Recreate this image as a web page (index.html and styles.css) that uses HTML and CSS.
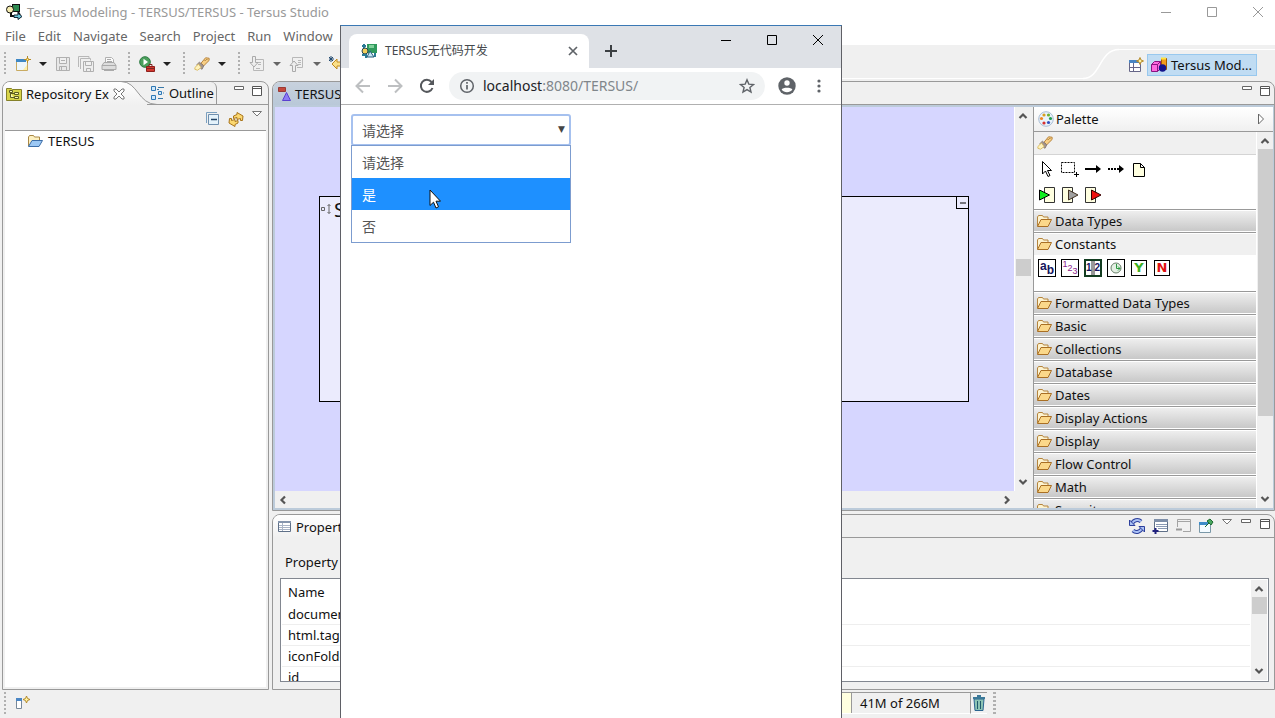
FILE: index.html
```html
<!DOCTYPE html>
<html lang="zh-CN">
<head>
	<meta charset="UTF-8">
	<title>Tersus Modeling - TERSUS/TERSUS - Tersus Studio</title>
	<link rel="stylesheet" href="styles.css">
</head>
<body>
	<svg class="defs" aria-hidden="true">
		<symbol id="folder" viewBox="0 0 16 16">
			<path d="M1.500 13V4l1-1.500h4l1 1.500h4.500v2.500" fill="#fdf3d0" stroke="#b5843c"/>
			<path d="M1.500 13.500L5 6.500h10.500L12 13.500z" fill="#fbd88a" stroke="#a96f24"/>
		</symbol>
		<symbol id="torch" viewBox="0 0 18 16">
			<path d="M8 7l5-6 4 .5V4l-6 6z" fill="#f8cf85" stroke="#b07a30"/>
			<path d="M12 4h1M14 3h1" stroke="#7a4a10"/>
			<path d="M6 6l5 4-2 4-6-5z" fill="#a3958e" stroke="#857870"/>
			<path d="M5 8l3 4-4 3-3-1V12z" fill="#fff3bd" stroke="#d7b85c"/>
		</symbol>
		<symbol id="down" viewBox="0 0 10 6"><path d="M1 1h8L5 5z" fill="currentColor"/></symbol>
		<symbol id="chev" viewBox="0 0 10 8"><path d="M1.500 6L5 2.500 8.500 6" fill="none" stroke="#555" stroke-width="2.200"/></symbol>
		<symbol id="min" viewBox="0 0 12 12"><path d="M1.500 1.500h9v3h-9z" fill="#fff" stroke="#666"/></symbol>
		<symbol id="max" viewBox="0 0 12 12"><path d="M1.500 1.500h9v9h-9zM1.500 3.500h9" fill="#fff" stroke="#555"/></symbol>
		<symbol id="tri" viewBox="0 0 12 12"><path d="M1.500 1.500h9L6 6z" fill="#fff" stroke="#777"/></symbol>
		<symbol id="wmin" viewBox="0 0 12 12"><path d="M1 6.500h10" stroke="currentColor"/></symbol>
		<symbol id="wmax" viewBox="0 0 12 12"><path d="M1.500 1.500h9v9h-9z" fill="none" stroke="currentColor"/></symbol>
		<symbol id="wclose" viewBox="0 0 12 12"><path d="M1 1l10 10M11 1L1 11" stroke="currentColor"/></symbol>
	</svg>

	<header class="titlebar">
		<svg class="i18" viewBox="0 0 18 18">
			<rect x="7.500" y="1.500" width="7" height="7" fill="#2e8a50" stroke="#111"/>
			<circle cx="5" cy="6.500" r="3.500" fill="#f6edb0" stroke="#111"/>
			<path d="M6 10v3h4M13 9l2 3" fill="none" stroke="#111" stroke-width="2"/>
			<path d="M9 12h4v-2l4 3.500-4 3v-2H9z" fill="#6cc6d8" stroke="#123"/>
		</svg>
		<span class="app-title">Tersus Modeling - TERSUS/TERSUS - Tersus Studio</span>
		<div class="win-buttons">
			<button aria-label="Minimize"><svg class="i12"><use href="#wmin"/></svg></button>
			<button aria-label="Maximize"><svg class="i12"><use href="#wmax"/></svg></button>
			<button aria-label="Close"><svg class="i12"><use href="#wclose"/></svg></button>
		</div>
	</header>

	<nav class="menubar">
		<button>File</button>
		<button>Edit</button>
		<button>Navigate</button>
		<button>Search</button>
		<button>Project</button>
		<button>Run</button>
		<button>Window</button>
	</nav>

	<div class="toolbar">
		<div class="group">
			<button aria-label="New"><svg class="i16" viewBox="0 0 16 16">
				<path d="M1.500 3.500h11v11h-11z" fill="#eef7fb" stroke="#c9ab62"/><path d="M1 3h10v3H1z" fill="#3f88c5"/>
				<path d="M8 14l4-5v5z" fill="#fff0a8"/><path d="M12.500 0v7M9 3.500h7" stroke="#b58a2a"/><path d="M11.500 2.500h2v2h-2z" fill="#fff3a0" stroke="#c9a030"/>
			</svg></button>
			<button aria-label="New menu"><svg class="drop"><use href="#down"/></svg></button>
			<button aria-label="Save"><svg class="i16" viewBox="0 0 16 16"><path d="M1.500 1.500h13v13h-13zM4.500 1.500v6h7v-6M4.500 14.500v-4h7v4M6.500 11v3M6 4.500h4" fill="#e8e8e8" stroke="#b0b0b0"/></svg></button>
			<button aria-label="Save all"><svg class="i16" viewBox="0 0 16 16"><path d="M.5 11V.5H11V3M2.500 13V2.500h10v2" fill="none" stroke="#b8b8b8"/><path d="M5.500 5.500h10v10h-10zM7.500 5.500v4h6v-4M8.500 15.500v-3h4v3" fill="#eee" stroke="#b0b0b0"/></svg></button>
			<button aria-label="Print"><svg class="i16" viewBox="0 0 16 16"><path d="M4.500 7V1.500h6l2 2V7" fill="#fafafa" stroke="#b0b0b0"/><path d="M3 6.500h10l2 3v4H1v-4zM1 9.500h14M3 14.500h10M6 3.500h4M6 5.500h5" fill="#ddd" stroke="#aaa"/></svg></button>
		</div>
		<div class="group">
			<button aria-label="Run external tool"><svg class="i16" viewBox="0 0 16 16">
				<circle cx="6" cy="6" r="5.300" fill="#4ba05c" stroke="#2b7a40"/><path d="M4.500 2.800L9 6 4.500 9.200z" fill="#fff"/>
				<path d="M7.500 10.500h8v5h-8z" fill="#d2362e" stroke="#8e201c"/><path d="M10 10V8.500h3V10M8 12.500h7" fill="none" stroke="#7c2722"/>
			</svg></button>
			<button aria-label="Run menu"><svg class="drop"><use href="#down"/></svg></button>
		</div>
		<div class="group">
			<button aria-label="Search"><svg class="i16"><use href="#torch"/></svg></button>
			<button aria-label="Search menu"><svg class="drop"><use href="#down"/></svg></button>
		</div>
		<div class="group dim">
			<button aria-label="Next annotation"><svg class="i16" viewBox="0 0 16 16"><path d="M6 3.500h8.500v11h-10V11M9 6.500h3M9 8.500h3M7 12.500h4" fill="none" stroke="#b8b8b8"/><path d="M3.500.5h3v6H9L5 11 1 6.500h2.500z" fill="#eee" stroke="#aaa"/></svg></button>
			<button aria-label="Next menu"><svg class="drop"><use href="#down"/></svg></button>
			<button aria-label="Previous annotation"><svg class="i16" viewBox="0 0 16 16"><path d="M3.500 6V1.500h10v10H8M9 4.500h3M9 6.500h3M9 8.500h3" fill="none" stroke="#b8b8b8"/><path d="M3.500 15.500h3v-6H9L5 5 1 9.500h2.500z" fill="#eee" stroke="#aaa"/></svg></button>
			<button aria-label="Previous menu"><svg class="drop"><use href="#down"/></svg></button>
			<button aria-label="Last edit"><svg class="i16" viewBox="0 0 16 16"><path d="M3 8l5-5v3h8v4H8v3z" fill="#fbe08a" stroke="#c08a20"/><path d="M2 0v6M-1 3h6M0 1l4 4M4 1L0 5" stroke="#234a70"/></svg></button>
		</div>
		<div class="persp-line"></div>
		<svg class="persp-curve" viewBox="0 0 36 36"><path d="M0 33.500C18 33.500 16 4.500 36 4.500" fill="none" stroke="#fff" stroke-width="1.500"/></svg>
		<div class="persp">
			<button aria-label="Open perspective"><svg class="i16" viewBox="0 0 16 16"><path d="M1.500 3.500h11v11h-11zM5.500 6v8M2 10.500h10" fill="#fff" stroke="#668"/><path d="M1 3h10v3H1z" fill="#4a86c4"/><path d="M12 .5L13 3l2.500 1L13 5l-1 2.500L11 5 8.500 4 11 3z" fill="#fff3a0" stroke="#b58a2a"/></svg></button>
			<button class="persp-active"><svg class="i16" viewBox="0 0 16 16">
				<path d="M10.500 1.500h5v11h-5z" fill="#f29a1c" stroke="#a35a00"/><path d="M10 .5h5v2h-5z" fill="#ffe23c"/>
				<path d="M.5 7.500l3-3h6v7l-3 3h-6z" fill="#ff6adf" stroke="#8a1580"/><path d="M.5 7.500h6v7M6.500 7.500l3-3" fill="none" stroke="#8a1580"/>
				<circle cx="11.500" cy="11" r="3.700" fill="#14148c"/>
			</svg>Tersus Mod...</button>
		</div>
	</div>

	<main class="workbench">
		<section class="view explorer">
			<div class="tabs">
				<button class="tab active"><svg class="i16" viewBox="0 0 16 16"><path d="M.5 2.500h5l1 1h9v11H.5z" fill="#d8d44a" stroke="#85812a"/><path d="M3.500 4.500h3v2h-3zM8.500 6.500h4v2h-4zM8.500 10.500h4v2h-4zM4.500 7v4.500H8M5 7.500h3" fill="#fbf9b0" stroke="#5d5b22"/></svg>Repository Ex</button>
				<button class="tab-x" aria-label="Close Repository Explorer"><svg class="i12" viewBox="0 0 12 12"><path d="M1 1h2l3 3 3-3h2v2L8 6l3 3v2H9L6 8l-3 3H1V9l3-3-3-3z" fill="#fff" stroke="#777"/></svg></button>
				<svg class="tab-curve" viewBox="0 0 36 24"><path d="M0 .5C17 .5 17 23.500 36 23.500V24H0z" fill="url(#tabfade)"/><path d="M0 .5C17 .5 17 23.500 36 23.500" fill="none" stroke="#999"/>
					<defs><linearGradient id="tabfade" x1="0" y1="0" x2="0" y2="1"><stop offset="0" stop-color="#fff"/><stop offset="1" stop-color="#f0f0f0"/></linearGradient></defs></svg>
				<button class="tab outline"><svg class="i16" viewBox="0 0 16 16"><path d="M1.500 1.500h4v4h-4zM1.500 10.500h4v4h-4z" fill="#cfe8fb" stroke="#2f78b4"/><path d="M8.500 6.500h3v3h-3z" fill="#cfe8fb" stroke="#2f78b4"/><path d="M8 2.500h6M8 13.500h5M7 4.500h2M13 8h1" stroke="#3878a8"/></svg>Outline</button>
				<div class="tab-fill">
					<button aria-label="Minimize"><svg class="i12"><use href="#min"/></svg></button>
					<button aria-label="Maximize"><svg class="i12"><use href="#max"/></svg></button>
				</div>
			</div>
			<div class="view-tools">
				<button aria-label="Collapse all"><svg class="i16" viewBox="0 0 16 16"><path d="M1.500 12V1.500H12" fill="none" stroke="#7aa0c0"/><path d="M3.500 3.500h10v10h-10z" fill="#e4f2fb" stroke="#6f8fae"/><path d="M6 8.500h6" stroke="#246" stroke-width="1.500"/></svg></button>
				<button aria-label="Link with editor"><svg class="i16" viewBox="0 0 16 16"><path d="M5.500 7.500V5L9 3.500V1.500L15 5l-.5 4.500h-2V7.500L9 8.500V6.500z" fill="#fbd870" stroke="#a8741c"/><path d="M10 9.500V12l-3 1.500v2L1 12l.5-4.500h2v2L7 8.500v2z" fill="#fbd870" stroke="#a8741c"/></svg></button>
				<button class="up" aria-label="View menu"><svg class="i12"><use href="#tri"/></svg></button>
			</div>
			<ul class="tree">
				<li><svg class="i16" viewBox="0 0 16 16"><path d="M1.500 13V4l1-1.500h4l1 1.500h5v3" fill="#fdf0c0" stroke="#a98744"/><path d="M1.500 13.500L5 7.500h10.500L12 13.500z" fill="#9cc8f4" stroke="#3c6ea8"/></svg>TERSUS</li>
			</ul>
		</section>

		<div class="column">
			<section class="view editor">
				<div class="tabs">
					<button class="tab editor-tab"><svg class="i16" viewBox="0 0 16 16"><path d="M2.500 1.500h7v4h-7z" fill="#c4483c" stroke="#9b3a34"/><path d="M10.500 6.500l4 8h-8z" fill="#8c7cf4" stroke="#5a40d0"/></svg>TERSUS</button>
					<div class="tab-fill">
						<button aria-label="Minimize"><svg class="i12"><use href="#min"/></svg></button>
						<button aria-label="Maximize"><svg class="i12"><use href="#max"/></svg></button>
					</div>
				</div>
				<div class="editor-body">
					<div class="diagram">
						<div class="canvas">
							<div class="node">
								<svg class="node-mark" viewBox="0 0 12 12"><path d="M1.500 4.500h3v3h-3zM9 1.500v9M7.500 3L9 1.500 10.500 3M7.500 9L9 10.500 10.500 9" fill="none" stroke="#666"/></svg>
								<span class="node-name">S</span>
								<button class="node-fold" aria-label="Collapse"><svg class="fold-bar" viewBox="0 0 8 2"><path d="M1 1h6" stroke="#000"/></svg></button>
							</div>
						</div>
						<div class="scroll-v">
							<svg class="chev"><use href="#chev"/></svg>
							<i class="thumb canvas-thumb"></i>
							<svg class="chev down"><use href="#chev"/></svg>
						</div>
						<div class="scroll-h">
							<svg class="chev left"><use href="#chev"/></svg>
							<svg class="chev right"><use href="#chev"/></svg>
						</div>
					</div>
					<aside class="palette">
						<div class="palette-head">
							<svg class="i16" viewBox="0 0 16 16"><circle cx="8" cy="8" r="7.300" fill="#eaf2fa" stroke="#a8bcd4"/><circle cx="6" cy="4" r="1.600" fill="#d8a020"/><circle cx="10.500" cy="4" r="1.600" fill="#70b030"/><circle cx="3.500" cy="7.500" r="1.600" fill="#f08820"/><circle cx="12.500" cy="7.500" r="1.600" fill="#209a50"/><circle cx="6" cy="12" r="1.600" fill="#d83030"/><circle cx="10.500" cy="11.500" r="1.600" fill="#3050c0"/></svg>
							<span>Palette</span>
							<button aria-label="Hide palette"><svg class="i12" viewBox="0 0 12 12"><path d="M3.500 1L8.500 6l-5 5z" fill="#fff" stroke="#666"/></svg></button>
						</div>
						<div class="palette-body">
							<div class="drawers">
								<div class="palette-tools"><svg class="i16"><use href="#torch"/></svg></div>
								<div class="tools shapes">
									<svg class="i18" viewBox="0 0 18 18"><path d="M4.500 1.500v12.500l3-3 2.500 5.500 2-1-2.500-5h4z" fill="#fff" stroke="#000"/></svg>
									<svg class="i18" viewBox="0 0 18 18"><path d="M.5 2.500h13v10h-13z" fill="none" stroke="#000" stroke-dasharray="2 1"/><path d="M15.500 12v5M13 14.500h5" stroke="#000"/></svg>
									<svg class="i18" viewBox="0 0 18 18"><path d="M1 9h13" stroke="#000" stroke-width="2"/><path d="M12 5l5 4-5 4z"/></svg>
									<svg class="i18" viewBox="0 0 18 18"><path d="M1 9h13" stroke="#000" stroke-width="2" stroke-dasharray="2 1"/><path d="M12 5l5 4-5 4z"/></svg>
									<svg class="i18" viewBox="0 0 18 18"><path d="M3.500 3.500h7l4 4v9h-11zM10.500 3.500v4h4" fill="#ffffe0" stroke="#000"/></svg>
								</div>
								<div class="tools slots">
									<svg class="i18" viewBox="0 0 18 18"><path d="M6.500 1.500h10v15h-10z" fill="#ffffe0" stroke="#333"/><path d="M1.500 4v10l10-5z" fill="#0ff01c" stroke="#000"/></svg>
									<svg class="i18" viewBox="0 0 18 18"><path d="M1.500 1.500h10v15h-10z" fill="#ffffe0" stroke="#333"/><path d="M7.500 4v10l9.500-5z" fill="#a0a0a0" stroke="#432"/></svg>
									<svg class="i18" viewBox="0 0 18 18"><path d="M1.500 1.500h10v15h-10z" fill="#ffffe0" stroke="#333"/><path d="M7.500 4v10l9.500-5z" fill="#f01010" stroke="#300"/></svg>
								</div>
								<button class="drawer"><svg class="i16"><use href="#folder"/></svg>Data Types</button>
								<button class="drawer open"><svg class="i16"><use href="#folder"/></svg>Constants</button>
								<div class="tools constants">
									<span class="const text"><b>a</b><b>b</b></span>
									<span class="const num"><b>1</b><b>2</b><b>3</b></span>
									<span class="const date"><b>1</b><b>2</b></span>
									<span class="const"><svg class="i16" viewBox="0 0 16 16"><circle cx="8" cy="8" r="5" fill="#e4f0e4" stroke="#6a806a"/><path d="M8.500 4v4.500H12M10 6.500l2 2-2 2" fill="none" stroke="#2a9a40"/></svg></span>
									<span class="const yes">Y</span>
									<span class="const no">N</span>
								</div>
								<button class="drawer"><svg class="i16"><use href="#folder"/></svg>Formatted Data Types</button>
								<button class="drawer"><svg class="i16"><use href="#folder"/></svg>Basic</button>
								<button class="drawer"><svg class="i16"><use href="#folder"/></svg>Collections</button>
								<button class="drawer"><svg class="i16"><use href="#folder"/></svg>Database</button>
								<button class="drawer"><svg class="i16"><use href="#folder"/></svg>Dates</button>
								<button class="drawer"><svg class="i16"><use href="#folder"/></svg>Display Actions</button>
								<button class="drawer"><svg class="i16"><use href="#folder"/></svg>Display</button>
								<button class="drawer"><svg class="i16"><use href="#folder"/></svg>Flow Control</button>
								<button class="drawer"><svg class="i16"><use href="#folder"/></svg>Math</button>
								<button class="drawer"><svg class="i16"><use href="#folder"/></svg>Security</button>
							</div>
							<div class="scroll-v">
								<svg class="chev"><use href="#chev"/></svg>
								<i class="thumb palette-thumb"></i>
								<svg class="chev down"><use href="#chev"/></svg>
							</div>
						</div>
					</aside>
				</div>
			</section>

			<section class="view properties">
				<div class="tabs">
					<button class="tab active"><svg class="i16" viewBox="0 0 16 16"><path d="M2.500 2.500h12v10h-12z" fill="#fff" stroke="#5f7088"/><path d="M2 2h13v2H2z" fill="#8494ac"/><path d="M3 6.500h11M3 8.500h11M3 10.500h11M6.500 4v8" stroke="#a9b4c6"/></svg>Properties</button>
					<div class="tab-fill wide">
						<button aria-label="Refresh"><svg class="i16" viewBox="0 0 16 16"><path d="M3 6a5.500 5.500 0 0 1 9-2.500M13 10a5.500 5.500 0 0 1-9 2.500" fill="none" stroke="#2c3f9c" stroke-width="4"/><path d="M3 6a5.500 5.500 0 0 1 9-2.500M13 10a5.500 5.500 0 0 1-9 2.500" fill="none" stroke="#a9c0f4" stroke-width="2"/><path d="M.5 2v5.500H6zM15.500 14V8.500H10z" fill="#a9c0f4" stroke="#2c3f9c"/></svg></button>
						<button aria-label="Add property"><svg class="i16" viewBox="0 0 16 16"><path d="M2.500 1.500h13v12h-13z" fill="#fff" stroke="#5f7088"/><path d="M2 1h14v3H2z" fill="#7d8ea8"/><path d="M4 6.500h11M4 8.500h11M6 10.500h9" stroke="#8a9ab4"/><path d="M3.500 10v6M.5 13h6" stroke="#20207c" stroke-width="2"/></svg></button>
						<button aria-label="Remove property"><svg class="i16" viewBox="0 0 16 16"><path d="M2.500 9V1.500h13v12H8M3 3.500h12" fill="none" stroke="#a4a4a4"/><path d="M1 11.500h6" stroke="#999" stroke-width="2"/></svg></button>
						<button aria-label="Pin"><svg class="i16" viewBox="0 0 16 16"><path d="M1.500 4.500h11v10h-11z" fill="#f4fbff" stroke="#7a98a8"/><path d="M1 4h9v3H1z" fill="#3d8cc8"/><path d="M10 2l4 4M7 9l4-4" stroke="#1c6a30"/><path d="M12 1l3 3-2 3-4-4z" fill="#4aa860" stroke="#1c6a30"/></svg></button>
						<button class="up" aria-label="View menu"><svg class="i12"><use href="#tri"/></svg></button>
						<button class="up" aria-label="Minimize"><svg class="i12"><use href="#min"/></svg></button>
						<button class="up" aria-label="Maximize"><svg class="i12"><use href="#max"/></svg></button>
					</div>
				</div>
				<p class="prop-label">Property name</p>
				<div class="prop-box">
					<table class="prop-table">
						<thead><tr><th>Name</th></tr></thead>
						<tbody>
							<tr><td>documentation</td></tr>
							<tr><td>html.tag</td></tr>
							<tr><td>iconFolder</td></tr>
							<tr><td>id</td></tr>
						</tbody>
					</table>
					<div class="scroll-v">
						<svg class="chev"><use href="#chev"/></svg>
						<i class="thumb"></i>
						<svg class="chev down"><use href="#chev"/></svg>
					</div>
				</div>
			</section>
		</div>
	</main>

	<footer class="status">
		<div class="group">
			<button aria-label="Fast view"><svg class="i16" viewBox="0 0 16 16"><path d="M1.500 3.500h5v10h-5z" fill="#fff" stroke="#789"/><path d="M1 3h6v3H1z" fill="#4a86c4"/><path d="M11.500 1l1 2.500L15 4.500l-2.500 1-1 2.500-1-2.500L8 4.500l2.500-1z" fill="#fff3a0" stroke="#b58a2a"/></svg></button>
		</div>
		<div class="heap">
			<i class="heap-used"></i>
			<span>41M of 266M</span>
		</div>
		<button class="trash" aria-label="Run garbage collector"><svg class="i16" viewBox="0 0 16 16"><path d="M3 4h10l-1 11.500H4z" fill="#8cc4b4" stroke="#2a6490"/><path d="M2 3h12M6 1h4" stroke="#3b7898" stroke-width="2"/><path d="M6.500 6v8M9.500 6v8" stroke="#1f5a6c"/></svg></button>
		<i class="grip"></i>
	</footer>

	<div class="browser">
		<div class="tabstrip">
			<div class="page-tab">
				<svg class="i16" viewBox="0 0 16 16"><path d="M6 1h10v9H6z" fill="#2f9a5c"/><path d="M8 2h5v3H8z" fill="#7fd09a"/><circle cx="4" cy="8" r="3" fill="#f2cf5a" stroke="#245"/><path d="M3 1v4M1 3h4M1 12h4v3M14 10v4" stroke="#2a7a94" stroke-width="2" fill="none"/><path d="M6 14l3-6 4 6z" fill="#c4e4f4" stroke="#245a78"/></svg>
				<span>TERSUS无代码开发</span>
				<button aria-label="Close tab"><svg class="i12" viewBox="0 0 12 12"><path d="M2 2l8 8M10 2l-8 8" stroke="#5f6368" stroke-width="1.700"/></svg></button>
			</div>
			<button class="new-tab" aria-label="New tab"><svg class="i14" viewBox="0 0 14 14"><path d="M7 1v12M1 7h12" stroke="#3c4043" stroke-width="2"/></svg></button>
			<div class="browser-buttons">
				<button aria-label="Minimize"><svg class="i12"><use href="#wmin"/></svg></button>
				<button aria-label="Maximize"><svg class="i12"><use href="#wmax"/></svg></button>
				<button aria-label="Close"><svg class="i12"><use href="#wclose"/></svg></button>
			</div>
		</div>
		<div class="navbar">
			<button aria-label="Back"><svg class="i16" viewBox="0 0 16 16"><path d="M15 8H2M8 1.500L1.500 8 8 14.500" fill="none" stroke="#bdbfc1" stroke-width="2"/></svg></button>
			<button aria-label="Forward"><svg class="i16" viewBox="0 0 16 16"><path d="M1 8h13M8 1.500L14.500 8 8 14.500" fill="none" stroke="#bdbfc1" stroke-width="2"/></svg></button>
			<button aria-label="Reload"><svg class="i16" viewBox="0 0 16 16"><path d="M13.500 10A6 6 0 1 1 12.500 4" fill="none" stroke="#55585c" stroke-width="2"/><path d="M15 1v6H9z" fill="#55585c"/></svg></button>
			<div class="omnibox">
				<svg class="i16" viewBox="0 0 16 16"><circle cx="8" cy="8" r="6.300" fill="none" stroke="#5f6368" stroke-width="1.500"/><path d="M8 7v4.500M8 4v1.700" stroke="#5f6368" stroke-width="1.700"/></svg>
				<span class="url">localhost<span class="url-rest">:8080/TERSUS/</span></span>
				<button aria-label="Bookmark"><svg class="i16" viewBox="0 0 16 16"><path d="M8 1.800l1.800 4.300 4.700.4-3.600 3 1.100 4.600-4-2.500-4 2.500 1.100-4.600-3.600-3 4.700-.4z" fill="none" stroke="#5f6368" stroke-width="1.400"/></svg></button>
			</div>
			<button class="profile" aria-label="Profile"><svg class="i18" viewBox="0 0 18 18"><circle cx="9" cy="9" r="8.700" fill="#5f6368"/><circle cx="9" cy="6" r="2.700" fill="#fff"/><path d="M3.600 12.500c1-2.300 9.800-2.300 10.800 0-2.500 3.600-8.300 3.600-10.800 0z" fill="#fff"/></svg></button>
			<button class="more" aria-label="Menu"><svg class="i16" viewBox="0 0 16 16"><circle cx="8" cy="3" r="1.600" fill="#5f6368"/><circle cx="8" cy="8" r="1.600" fill="#5f6368"/><circle cx="8" cy="13" r="1.600" fill="#5f6368"/></svg></button>
		</div>
		<div class="page">
			<div class="picker">
				<select class="picker-select" aria-label="请选择">
					<option>请选择</option>
					<option>是</option>
					<option>否</option>
				</select>
				<span class="picker-arrow">▼</span>
				<ul class="picker-list">
					<li>请选择</li>
					<li class="hover">是</li>
					<li>否</li>
				</ul>
				<svg class="cursor" viewBox="0 0 12 20"><path d="M1 1v15.500l3.500-3.300L7 19l2.500-1.200L7 12.200h4.500z" fill="#fff" stroke="#111"/></svg>
			</div>
		</div>
	</div>
</body>
</html>
```
FILE: styles.css
```css
body, ul, p {
	margin: 0;
	padding: 0;
}

* {
	box-sizing: border-box;
}

body {
	display: flex;
	flex-direction: column;
	height: 100vh;
	overflow: hidden;
	position: relative;
	background-color: #F0F0F0;
	color: #111;
	font: 13px/20px "Noto Sans", "Noto Sans CJK SC", sans-serif;
}

button {
	display: flex;
	align-items: center;
	margin: 0;
	padding: 0;
	border: 0;
	background: none;
	color: inherit;
	font: inherit;
	white-space: nowrap;
}

ul {
	list-style: none;
}

svg {
	display: block;
	flex: none;
}

.defs {
	position: absolute;
	width: 0;
	height: 0;
}

.i12 {
	width: 12px;
	height: 12px;
}

.i14 {
	width: 14px;
	height: 14px;
}

.i16 {
	width: 16px;
	height: 16px;
}

.i18 {
	width: 18px;
	height: 18px;
}

/* title and menu */
.titlebar {
	display: flex;
	align-items: center;
	height: 24px;
	padding-left: 5px;
	gap: 4px;
	background-color: #FFF;
	color: #999;
}

.win-buttons {
	display: flex;
	gap: 12px;
	margin-left: auto;
}

.win-buttons button {
	width: 34px;
	height: 24px;
	justify-content: center;
}

.menubar {
	display: flex;
	height: 21px;
	padding: 2px 5px 0;
	gap: 12px;
	align-items: center;
	background-color: #FFF;
	color: #666;
}

/* toolbar */
.toolbar {
	display: flex;
	height: 36px;
	padding-left: 4px;
}

.toolbar .group {
	padding-top: 2px;
}

.group {
	display: flex;
	align-items: center;
	gap: 7px;
	margin-right: 11px;
	padding-left: 11px;
	background: repeating-linear-gradient(#B0B0B0 0 2px, #F0F0F0 2px 4px) 0 center / 2px 22px no-repeat;
}

.drop {
	width: 10px;
	height: 6px;
	color: #222;
}

.dim .drop {
	color: #666;
}

.persp-line {
	flex: 1;
	height: 34px;
	border-bottom: 1px solid #FFF;
}

.persp-curve {
	width: 36px;
	height: 36px;
}

.persp {
	display: flex;
	align-items: center;
	gap: 3px;
	height: 32px;
	margin-top: 4px;
	padding: 0 18px 2px 9px;
	border-top: 1px solid #FFF;
}

.persp-active {
	width: 110px;
	height: 22px;
	gap: 4px;
	padding-left: 3px;
	border: 1px solid #98C8EE;
	background-color: #C0DCF3;
}

/* workbench */
.workbench {
	display: flex;
	flex: 1;
	min-height: 0;
	gap: 3px;
	padding-left: 2px;
}

.column {
	display: flex;
	flex-direction: column;
	flex: 1;
	min-width: 0;
	gap: 3px;
}

.view {
	display: flex;
	flex-direction: column;
	border: 1px solid #999;
	border-radius: 8px 8px 0 0;
	overflow: hidden;
}

.explorer {
	width: 267px;
}

.tabs {
	display: flex;
	flex: none;
	height: 23px;
}

.tab {
	gap: 4px;
	padding-left: 3px;
}

.tab.active {
	background: linear-gradient(#FFF, #F0F0F0);
}

.tab-x {
	width: 12px;
	padding-left: 4px;
	background: linear-gradient(#FFF, #F0F0F0);
}

.tab-x svg {
	position: relative;
	z-index: 1;
}

.tab-curve {
	width: 36px;
	height: 24px;
	margin-top: -1px;
}

.outline {
	gap: 3px;
	margin-left: -10px;
	padding-right: 2px;
	border-right: 1px solid #999;
	border-bottom: 1px solid #999;
	border-radius: 0 6px 0 0;
}

.tab-fill {
	display: flex;
	flex: 1;
	justify-content: flex-end;
	gap: 6px;
	padding: 3px 5px 0 0;
	border-bottom: 1px solid #999;
}

.tab-fill button {
	align-items: flex-start;
}

.editor .tab-fill, .properties .tab-fill {
	padding-right: 3px;
}

.wide {
	gap: 7px;
}

.view-tools {
	display: flex;
	flex: none;
	justify-content: flex-end;
	gap: 7px;
	height: 26px;
	margin: 0 2px;
	padding: 2px 3px 0 0;
	border-bottom: 1px solid #999;
}

.view-tools .up {
	align-items: flex-start;
	padding-top: 3px;
}

.tree {
	flex: 1;
	margin: 0 2px 2px;
	background-color: #FFF;
}

.tree li {
	display: flex;
	align-items: center;
	gap: 5px;
	padding-left: 22px;
}

/* editor */
.editor {
	flex: 1;
	min-height: 0;
}

.editor-tab {
	gap: 3px;
	background: linear-gradient(#C8D2DE, #B9C8D8);
}

.editor-body {
	display: flex;
	flex: 1;
	min-height: 0;
	border: 2px solid #BCCBDA;
	border-right-width: 1px;
}

.diagram {
	display: grid;
	flex: 1;
	grid-template-columns: 1fr 17px;
	grid-template-rows: 1fr 17px;
	margin-right: 1px;
}

.canvas {
	display: flex;
	padding: 89px 45px 89px 44px;
	border-right: 1px solid #FFF;
	background-color: #D6D6FF;
}

.node {
	display: flex;
	flex: 1;
	align-items: flex-start;
	border: 1px solid #000;
	background-color: #EBEBFD;
}

.node-mark {
	width: 12px;
	height: 12px;
	margin-top: 6px;
}

.node-name {
	padding-left: 2px;
	font-size: 20px;
	line-height: 26px;
}

.node-fold {
	width: 12px;
	height: 12px;
	margin-left: auto;
	justify-content: center;
	border: 1px solid #000;
	border-width: 0 0 1px 1px;
}

.fold-bar {
	width: 8px;
	height: 2px;
}

.scroll-v {
	display: flex;
	flex-direction: column;
	align-items: center;
	width: 16px;
	padding: 5px 0;
	background-color: #F0F0F0;
}

.scroll-h {
	display: flex;
	align-items: center;
	justify-content: space-between;
	padding: 0 3px;
}

.chev {
	width: 10px;
	height: 8px;
}

.down {
	margin-top: auto;
	transform: rotate(180deg);
}

.left {
	transform: rotate(-90deg);
}

.right {
	transform: rotate(90deg);
}

.thumb {
	width: 15px;
	height: 17px;
	margin-top: 4px;
	background-color: #CDCDCD;
}

.canvas-thumb {
	margin-top: 139px;
}

.palette-thumb {
	height: 267px;
}

/* palette */
.palette {
	display: flex;
	flex-direction: column;
	width: 240px;
	border-left: 1px solid #999;
}

.palette-head {
	display: flex;
	flex: none;
	align-items: center;
	gap: 2px;
	height: 25px;
	padding: 0 6px 0 4px;
	border-bottom: 1px solid #999;
	background: linear-gradient(#FFF, #F0F0F0);
}

.palette-head button {
	margin-left: auto;
}

.palette-body {
	display: flex;
	flex: 1;
	min-height: 0;
}

.drawers {
	flex: 1;
	overflow: hidden;
	border-right: 1px solid #FFF;
	background-color: #FFF;
}

.palette-tools {
	height: 23px;
	padding: 3px;
	border-bottom: 1px solid #D4D4D4;
	background-color: #F0F0F0;
}

.tools {
	display: flex;
	align-items: center;
	gap: 5px;
	padding-left: 4px;
}

.shapes {
	height: 27px;
}

.slots {
	height: 27px;
	padding-bottom: 2px;
}

.constants {
	height: 36px;
	padding-bottom: 10px;
}

.drawer {
	width: 100%;
	height: 23px;
	gap: 3px;
	padding-left: 2px;
	border: 1px solid #FFF;
	border-width: 1px 0;
	border-top-color: #999;
	box-shadow: inset 0 1px #FFF;
	background: linear-gradient(#F0F0F0, #C8C8C8);
}

.drawer.open {
	border-bottom: 0;
	background: #F0F0F0;
}

.const {
	display: flex;
	align-items: center;
	justify-content: center;
	width: 18px;
	height: 18px;
	border: 1px solid #000;
	font: bold 13px/16px "DejaVu Sans", sans-serif;
}

.text {
	color: #14145C;
	font: bold 12px/12px "Liberation Sans", sans-serif;
}

.text b:first-child, .num b:first-child {
	align-self: flex-start;
}

.text b:last-child, .num b:last-child {
	align-self: flex-end;
}

.num {
	color: #8A1C8A;
	font: 9px/9px "Liberation Sans", sans-serif;
}

.num b {
	font-weight: normal;
}

.date {
	gap: 3px;
	border: 2px solid #123C20;
	background: linear-gradient(90deg, #FFF 5px, #999 5px 9px, #FFF 9px);
	color: #14145C;
	font: bold 10px/14px "Liberation Sans", sans-serif;
}

.yes, .no {
	width: 16px;
	height: 16px;
	margin: 0 1px;
}

.yes {
	color: #3CB020;
}

.no {
	color: #E01010;
}

/* properties */
.properties {
	flex: none;
	height: 176px;
}

.prop-label {
	padding: 14px 12px 6px;
}

.prop-box {
	display: flex;
	flex: 1;
	min-height: 0;
	margin: 0 5px 7px 7px;
	padding-right: 1px;
	overflow: hidden;
	border: 1px solid #828790;
	background-color: #FFF;
}

.prop-box .scroll-v {
	margin: 1px 0;
}

.prop-table {
	flex: 1;
	display: block;
	border-spacing: 0;
	margin: 0 1px;
	overflow: hidden;
}

.prop-table thead, .prop-table tbody, .prop-table tr, .prop-table th, .prop-table td {
	display: block;
}

.prop-table th {
	height: 25px;
	padding: 3px 6px 0;
	text-align: left;
	font-weight: normal;
}

.prop-table td {
	height: 21px;
	padding: 0 6px;
	border-bottom: 1px solid #EEE;
}

/* status line */
.status {
	display: flex;
	flex: none;
	align-items: center;
	height: 28px;
	padding: 0 0 2px 4px;
}

.status .group {
	height: 26px;
	flex: 1;
}

.heap {
	display: flex;
	width: 144px;
	height: 22px;
	border: 1px solid #999;
	border-bottom-color: #FFF;
}

.heap-used {
	width: 24px;
	margin-right: 8px;
	border-right: 1px solid #999;
	background-color: #FFFFE0;
}

.trash {
	width: 16px;
	height: 22px;
	border-top: 1px solid #999;
	border-bottom: 1px solid #FFF;
}

.grip {
	width: 3px;
	height: 22px;
	margin: 0 279px 0 6px;
	background: repeating-linear-gradient(#B0B0B0 0 2px, #F0F0F0 2px 4px);
}

/* browser window floating over the workbench */
.browser {
	position: absolute;
	top: 25px;
	bottom: 0;
	left: 340px;
	display: flex;
	flex-direction: column;
	width: 502px;
	border: 1px solid #5F6066;
	border-top-color: #3A78B4;
	border-bottom: 0;
	background-color: #FFF;
}

.tabstrip {
	display: flex;
	align-items: flex-start;
	height: 42px;
	padding-left: 8px;
	background-color: #DEE1E6;
}

.page-tab {
	display: flex;
	align-items: center;
	gap: 8px;
	width: 240px;
	height: 34px;
	margin-top: 8px;
	padding: 0 10px 0 12px;
	border-radius: 8px 8px 0 0;
	background-color: #FFF;
	color: #45494D;
	font-size: 12px;
}

.page-tab button {
	margin-left: auto;
}

.new-tab {
	height: 34px;
	margin: 8px 0 0 15px;
}

.browser-buttons {
	display: flex;
	margin-left: auto;
	color: #000;
}

.browser-buttons button {
	width: 46px;
	height: 28px;
	justify-content: center;
}

.navbar {
	display: flex;
	align-items: center;
	gap: 16px;
	height: 37px;
	padding: 0 14px;
	border-bottom: 1px solid #B0B0B0;
}

.omnibox {
	display: flex;
	flex: 1;
	align-items: center;
	gap: 8px;
	height: 28px;
	margin: 0 -3px 0 -2px;
	padding: 0 10px;
	border-radius: 14px;
	background-color: #F1F3F4;
}

.url {
	color: #202124;
	font-size: 14px;
}

.url-rest {
	color: #80868B;
}

.omnibox button {
	margin-left: auto;
}

.more {
	margin-left: -1px;
}

.page {
	flex: 1;
	padding: 9px 10px;
}

.picker {
	position: relative;
	width: 220px;
	color: #555;
	font: 14px/32px "Noto Sans CJK SC", sans-serif;
}

.picker-select {
	display: block;
	width: 100%;
	height: 32px;
	padding: 0 9px;
	appearance: none;
	border: 2px solid #A6C1EF;
	border-radius: 3px;
	background-color: #FFF;
	color: inherit;
	font: inherit;
	line-height: 28px;
}

.picker-arrow {
	position: absolute;
	top: 0;
	right: 6px;
	font: 9px/30px "DejaVu Sans", sans-serif;
	color: #444;
}

.picker-list {
	position: absolute;
	top: 31px;
	left: 0;
	width: 100%;
	border: 1px solid #7C9CCF;
	background-color: #FFF;
}

.picker-list li {
	height: 32px;
	padding: 0 10px;
}

.picker-list .hover {
	background-color: #1E90FF;
	color: #FFF;
}

.cursor {
	position: absolute;
	top: 75px;
	left: 78px;
	width: 12px;
	height: 20px;
}
```
